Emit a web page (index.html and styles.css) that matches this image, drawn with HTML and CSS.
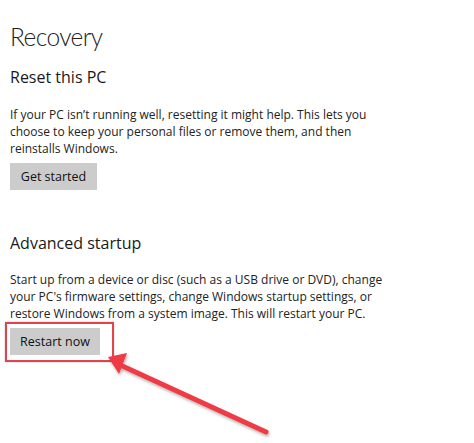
FILE: index.html
```
<!DOCTYPE html>
<html lang="en">
<head>
	<meta charset="UTF-8">
	<title>Recovery</title>
	<link rel="stylesheet" href="styles.css">
</head>
<body>
	<div class="page">
		<h1 class="page-title">Recovery</h1>

		<h2 class="section-title">Reset this PC</h2>
		<p class="section-text">If your PC isn’t running well, resetting it might help. This lets you<br>choose to keep your personal files or remove them, and then<br>reinstalls Windows.</p>
		<button class="btn btn-reset">Get started</button>

		<h2 class="section-title section-advanced">Advanced startup</h2>
		<p class="section-text section-text-adv">Start up from a device or disc (such as a USB drive or DVD), change<br>your PC's firmware settings, change Windows startup settings, or<br>restore Windows from a system image. This will restart your PC.</p>
		<div class="highlight">
			<button class="btn btn-restart">Restart now</button>
		</div>

		<!-- annotation arrow -->
		<svg class="arrow" width="474" height="443" viewBox="0 0 474 443">
			<defs>
				<filter id="shadow" x="-20%" y="-20%" width="140%" height="140%">
					<feDropShadow dx="1" dy="2" stdDeviation="1.5" flood-color="#000" flood-opacity="0.3"/>
				</filter>
			</defs>
			<g filter="url(#shadow)">
				<line x1="266" y1="432" x2="118" y2="364" stroke="#ee3b44" stroke-width="5" stroke-linecap="round"/>
				<polygon points="108,357 127,353 119,374" fill="#ee3b44"/>
			</g>
		</svg>
	</div>
</body>
</html>
```

FILE: styles.css
```
html,body,div,h1,h2,p{
	padding: 0;
	margin: 0;
	border: 0;
}
body{
	background: #fff;
	color: #1a1a1a;
	font-family: "Open Sans", "Noto Sans", sans-serif;
}
.page{
	position: relative;
	width: 474px;
	height: 443px;
	padding-left: 10px;
	box-sizing: border-box;
	overflow: hidden;
}
.page-title{
	margin-top: 22px;
	font-family: Lato, "Open Sans", sans-serif;
	font-size: 24.5px;
	line-height: 30px;
	font-weight: 300;
	letter-spacing: -0.6px;
	color: #222;
}
.section-title{
	margin-top: 15px;
	font-size: 16px;
	line-height: 20px;
	font-weight: 400;
	color: #1a1a1a;
}
.section-advanced{
	margin-top: 43px;
}
.section-text{
	margin-top: 19px;
	font-size: 12px;
	line-height: 17px;
	color: #222;
}
.section-text-adv{
	margin-top: 18px;
}
.btn{
	display: block;
	box-sizing: border-box;
	height: 27px;
	padding: 0;
	border: 0;
	background: #cccccc;
	color: #111;
	font-family: "Open Sans", "Noto Sans", sans-serif;
	font-size: 12.5px;
	line-height: 27px;
	text-align: center;
	white-space: nowrap;
}
.btn-reset{
	margin-top: 6px;
	width: 87px;
}
.highlight{
	display: inline-block;
	margin-left: -5px;
	padding: 4px 12px 5px 3px;
	border: 2px solid #e3444b;
	box-shadow: 0 0 2px rgba(0,0,0,0.25);
}
.btn-restart{
	width: 90px;
}
.arrow{
	position: absolute;
	left: 0;
	top: 0;
}
```
